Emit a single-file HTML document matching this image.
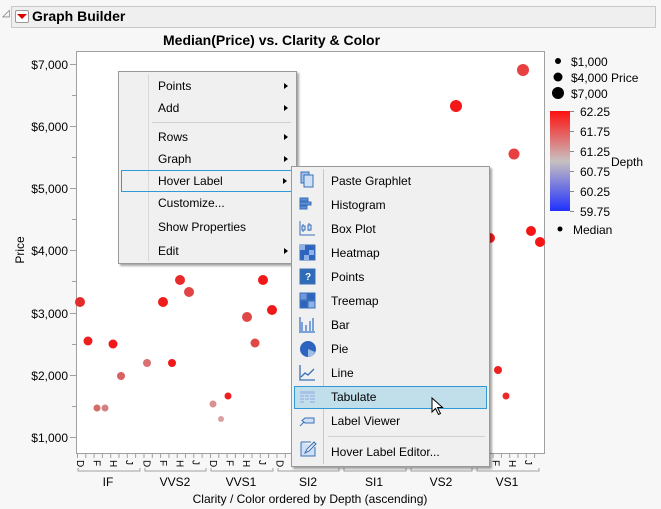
<!DOCTYPE html>
<html><head><meta charset="utf-8"><style>
*{margin:0;padding:0;box-sizing:border-box}
body{width:661px;height:509px;background:#f7f7f7;font-family:"Liberation Sans",Arial,sans-serif;font-size:12px;color:#000;position:relative;overflow:hidden}
.abs{position:absolute}
.menu{position:absolute;background:#f0f0f0;border:1px solid #999;box-shadow:2px 2px 2px rgba(0,0,0,.35)}
.mi{position:absolute;left:0;right:0;height:22px;line-height:22px;font-size:12px}
.arr{position:absolute;right:8px;top:8px;width:0;height:0;border-left:4px solid #000;border-top:3px solid transparent;border-bottom:3px solid transparent}
</style></head><body>
<!-- header -->
<div class="abs" style="left:2px;top:8px;font-size:10px;color:#666">◿</div>
<div class="abs" style="left:11px;top:6px;width:645px;height:22px;background:#efefef;border:1px solid #c8c8c8"></div>
<div class="abs" style="left:15px;top:10px;width:14px;height:13px;background:#fff;border:1px solid #999;border-radius:2px"></div>
<div class="abs" style="left:17px;top:14px;width:0;height:0;border-left:5px solid transparent;border-right:5px solid transparent;border-top:5px solid #d00"></div>
<div class="abs" style="left:32px;top:8px;font-size:14px;font-weight:bold">Graph Builder</div>
<div class="abs" style="left:163px;top:32px;font-size:14px;font-weight:bold">Median(Price) vs. Clarity &amp; Color</div>

<svg class="abs" style="left:0;top:0" width="661" height="509">
<rect x="76.5" y="51.5" width="468" height="402" fill="#fff" stroke="#a0a0a0"/>
<g stroke="#a0a0a0">
<line x1="70" y1="64.5" x2="76" y2="64.5"/><line x1="72" y1="95.5" x2="76" y2="95.5"/>
<line x1="70" y1="126.5" x2="76" y2="126.5"/><line x1="72" y1="157.5" x2="76" y2="157.5"/>
<line x1="70" y1="188.5" x2="76" y2="188.5"/><line x1="72" y1="219.5" x2="76" y2="219.5"/>
<line x1="70" y1="250.5" x2="76" y2="250.5"/><line x1="72" y1="281.5" x2="76" y2="281.5"/>
<line x1="70" y1="313.5" x2="76" y2="313.5"/><line x1="72" y1="344.5" x2="76" y2="344.5"/>
<line x1="70" y1="375.5" x2="76" y2="375.5"/><line x1="72" y1="406.5" x2="76" y2="406.5"/>
<line x1="70" y1="437.5" x2="76" y2="437.5"/>
</g>
<g font-size="12" text-anchor="end" fill="#000">
<text x="68" y="69">$7,000</text><text x="68" y="131">$6,000</text><text x="68" y="193">$5,000</text>
<text x="68" y="255">$4,000</text><text x="68" y="318">$3,000</text><text x="68" y="380">$2,000</text><text x="68" y="442">$1,000</text>
</g>
<text x="24" y="250" font-size="12" transform="rotate(-90 24 250)" text-anchor="middle">Price</text>
<g id="ticks" stroke="#a0a0a0"></g>
<g fill="none" stroke="#a0a0a0">
<path d="M78 468v3h62v-3M145 468v3h61v-3M211 468v3h62v-3M278 468v3h61v-3M344 468v3h62v-3M411 468v3h61v-3M477 468v3h62v-3"/>
</g>
<g font-size="12" text-anchor="middle">
<text x="108" y="486">IF</text><text x="175" y="486">VVS2</text><text x="241" y="486">VVS1</text>
<text x="308" y="486">SI2</text><text x="374" y="486">SI1</text><text x="441" y="486">VS2</text><text x="507" y="486">VS1</text>
<text x="310" y="503">Clarity / Color ordered by Depth (ascending)</text>
</g>
<g id="letters" font-size="10"></g>
<g>
<circle cx="80" cy="302" r="5" fill="#e52a2a"/><circle cx="88" cy="341" r="4.5" fill="#ec1f1f"/>
<circle cx="97" cy="408" r="3.5" fill="#d86a6a"/><circle cx="105" cy="408" r="3.5" fill="#d58080"/>
<circle cx="113" cy="344" r="4.5" fill="#f01818"/><circle cx="121" cy="376" r="4" fill="#dc6060"/>
<circle cx="147" cy="363" r="4" fill="#d87070"/><circle cx="163" cy="302" r="5" fill="#ef1c1c"/>
<circle cx="172" cy="363" r="4" fill="#f01818"/><circle cx="180" cy="280" r="5" fill="#ea2a2a"/>
<circle cx="189" cy="292" r="5" fill="#e04444"/><circle cx="213" cy="404" r="3.5" fill="#d89090"/>
<circle cx="221" cy="419" r="3" fill="#d8a0a0"/><circle cx="228" cy="396" r="3.5" fill="#ee2020"/>
<circle cx="247" cy="317" r="5" fill="#e04848"/><circle cx="255" cy="343" r="4.5" fill="#e04848"/>
<circle cx="263" cy="280" r="5" fill="#f21818"/><circle cx="272" cy="310" r="5" fill="#f01818"/>
<circle cx="456" cy="106" r="6" fill="#f51818"/><circle cx="514" cy="154" r="5.5" fill="#e84040"/>
<circle cx="523" cy="70" r="6" fill="#e84040"/><circle cx="490" cy="238" r="5" fill="#f02020"/>
<circle cx="531" cy="231" r="5" fill="#f51515"/><circle cx="540" cy="242" r="5" fill="#f51515"/>
<circle cx="498" cy="370" r="4" fill="#ee2020"/><circle cx="506" cy="396" r="3.5" fill="#ee2828"/>
</g>
<!-- legend -->
<circle cx="558" cy="61" r="3" fill="#000"/><circle cx="558" cy="77" r="4.5" fill="#000"/><circle cx="558" cy="93" r="6" fill="#000"/>
<g font-size="12"><text x="571" y="66">$1,000</text><text x="571" y="82">$4,000 Price</text><text x="571" y="98">$7,000</text></g>
<defs><linearGradient id="g" x1="0" y1="0" x2="0" y2="1"><stop offset="0" stop-color="#ff1010"/><stop offset=".5" stop-color="#c8c0c0"/><stop offset="1" stop-color="#2030ff"/></linearGradient></defs>
<rect x="550" y="111" width="20" height="100" fill="url(#g)"/>
<g stroke="#888"><line x1="570" y1="111.5" x2="574" y2="111.5"/><line x1="570" y1="131.5" x2="574" y2="131.5"/><line x1="570" y1="151.5" x2="574" y2="151.5"/><line x1="570" y1="171.5" x2="574" y2="171.5"/><line x1="570" y1="191.5" x2="574" y2="191.5"/><line x1="570" y1="211.5" x2="574" y2="211.5"/></g>
<g font-size="12"><text x="580" y="116">62.25</text><text x="580" y="136">61.75</text><text x="580" y="156">61.25</text><text x="580" y="176">60.75</text><text x="580" y="196">60.25</text><text x="580" y="216">59.75</text><text x="611" y="166">Depth</text><text x="573" y="234">Median</text></g>
<circle cx="560" cy="229" r="2.5" fill="#000"/>
</svg>

<!-- context menu -->
<div class="menu" style="left:118px;top:71px;width:179px;height:193px">
<div class="abs" style="left:29px;top:2px;width:1px;height:187px;background:#d8d8d8"></div>
<div class="mi" style="top:3px"><span style="margin-left:39px">Points</span><i class="arr"></i></div>
<div class="mi" style="top:25px"><span style="margin-left:39px">Add</span><i class="arr"></i></div>
<div class="abs" style="left:33px;right:5px;top:50px;height:1px;background:#d0d0d0"></div>
<div class="mi" style="top:54px"><span style="margin-left:39px">Rows</span><i class="arr"></i></div>
<div class="mi" style="top:76px"><span style="margin-left:39px">Graph</span><i class="arr"></i></div>
<div class="mi" style="top:98px;left:2px;right:2px;border:1px solid #3399d6;line-height:20px"><span style="margin-left:36px">Hover Label</span><i class="arr" style="top:7px;right:6px"></i></div>
<div class="mi" style="top:120px"><span style="margin-left:39px">Customize...</span></div>
<div class="mi" style="top:144px"><span style="margin-left:39px">Show Properties</span></div>
<div class="mi" style="top:168px"><span style="margin-left:39px">Edit</span><i class="arr"></i></div>
</div>

<!-- submenu -->
<div class="menu" style="left:291px;top:166px;width:199px;height:301px">
<div class="abs" style="left:31px;top:2px;width:1px;height:295px;background:#c8c8c8"></div>
<div class="abs" style="left:2px;top:219px;width:193px;height:23px;background:#c1deeb;border:1px solid #3399d6"></div>
<div class="abs" style="left:36px;right:4px;top:269px;height:1px;background:#d0d0d0"></div>
<div class="abs" style="left:39px;top:6px;line-height:16px">
<div style="height:24px">Paste Graphlet</div><div style="height:24px">Histogram</div><div style="height:24px">Box Plot</div><div style="height:24px">Heatmap</div><div style="height:24px">Points</div><div style="height:24px">Treemap</div><div style="height:24px">Bar</div><div style="height:24px">Pie</div><div style="height:24px">Line</div><div style="height:24px">Tabulate</div><div style="height:31px">Label Viewer</div><div>Hover Label Editor...</div>
</div>
<svg class="abs" style="left:0;top:0" width="32" height="300">
<g fill="#5b8fd6" stroke="#3a6fb8" stroke-width="1">
<rect x="9" y="5" width="8" height="11" fill="#9fbfe8"/><rect x="12" y="8" width="9" height="12" fill="#cfe0f5"/>
<rect x="8" y="31" width="8" height="3"/><rect x="8" y="35" width="11" height="3"/><rect x="8" y="39" width="7" height="3"/>
<path d="M8 54v14h15M11 57v8M17 56v8" fill="none"/><rect x="10" y="59" width="3" height="4" fill="#cfe0f5"/><rect x="16" y="58" width="3" height="5" fill="#cfe0f5"/>
<rect x="8" y="78" width="15" height="15" fill="#2e63c0"/><rect x="8" y="78" width="5" height="5" fill="#8fb2e6" stroke="none"/><rect x="17" y="83" width="5" height="5" fill="#8fb2e6" stroke="none"/><rect x="12" y="88" width="5" height="5" fill="#8fb2e6" stroke="none"/>
<rect x="8" y="102" width="15" height="15" fill="#2e6cb8"/>
<rect x="8" y="126" width="7" height="7" fill="#6d9ad8"/><rect x="16" y="126" width="7" height="7" fill="#2e63c0"/><rect x="8" y="134" width="7" height="7" fill="#2e63c0"/><rect x="16" y="134" width="7" height="7" fill="#8fb2e6"/>
<path d="M8 150v15h15M10 155v9M14 158v6M18 154v10M21 151v13" fill="none" stroke="#7ba1d8" stroke-width="2"/>
<circle cx="16" cy="182" r="8" fill="#2e63c0" stroke="none"/><path d="M16 182l7 3a8 8 0 0 1-7 5z" fill="#9fbfe8" stroke="none"/>
<path d="M8 198v15h15M9 210l4-4 3 2 6-6" fill="none" stroke-width="1.3"/>
<g fill="#a8c2e8" stroke="none"><rect x="8" y="224" width="15" height="3"/><rect x="8" y="228" width="4" height="2"/><rect x="13" y="228" width="4" height="2"/><rect x="18" y="228" width="5" height="2"/><rect x="8" y="231" width="4" height="2"/><rect x="13" y="231" width="4" height="2"/><rect x="18" y="231" width="5" height="2"/><rect x="8" y="234" width="4" height="2"/><rect x="18" y="234" width="5" height="2"/></g>
<path d="M13 251h9v5h-9l-3-2.5z" fill="#cfe0f5"/><path d="M8 259l4-4" fill="none"/>
<path d="M9 275h10M9 275v14h14v-9M13 286l2-4 7-7 2 2-7 7z" fill="#cfe0f5"/>
</g>
<text x="13" y="113" font-size="10" font-weight="bold" fill="#fff">?</text>
</svg>
</div>
<!-- cursor -->
<svg class="abs" style="left:431px;top:397px" width="14" height="20"><path d="M1 1v14l3.5-3.5 3 6 2-1-3-6h5z" fill="#fff" stroke="#000"/></svg>

<script>
var t=document.getElementById('ticks'),l=document.getElementById('letters'),s='';var ls='';
var L=['D','E','F','G','H','I','J'];
for(var g=0;g<7;g++){for(var k=0;k<8;k++){var x=77.5+g*66.5+k*8.3;s+='<line x1="'+x+'" y1="453" x2="'+x+'" y2="458"/>';}
for(var k=0;k<7;k+=2){var x=81+g*66.5+k*8.2;ls+='<text transform="translate('+(x-4)+' 460) rotate(90)">'+L[k]+'</text>';}}
t.innerHTML=s;l.innerHTML=ls;
</script>
</body></html>
